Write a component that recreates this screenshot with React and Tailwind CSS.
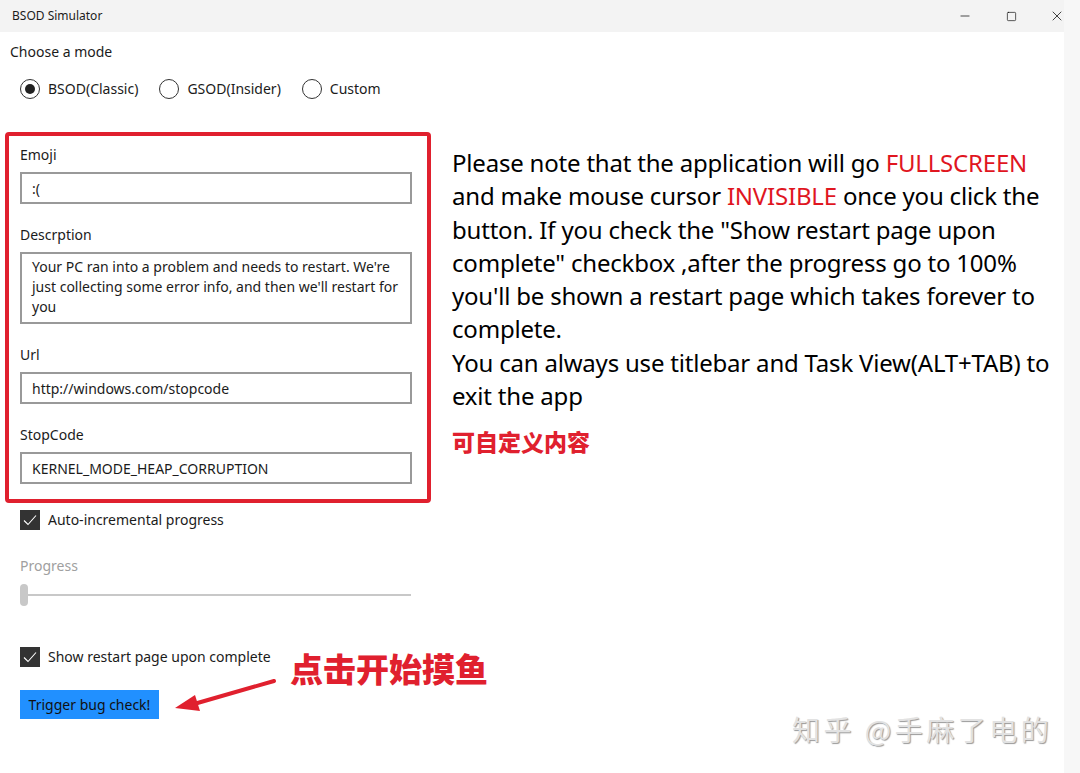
import { Minus, Square, X } from 'lucide-react';

const FONT = { fontFamily: '"Segoe UI", "Noto Sans", "Noto Sans CJK SC", sans-serif' };

const Radio = ({ label, checked }) => (
  <label className="flex items-center gap-2 mr-[21px]">
    <span className="w-5 h-5 rounded-full border border-[#333] flex items-center justify-center">
      {checked && <span className="w-[10px] h-[10px] rounded-full bg-[#222]" />}
    </span>
    <span className="text-[14px] text-[#1b1b1b]">{label}</span>
  </label>
);

const Field = ({ label, value, tall }) => (
  <div className="flex flex-col">
    <p className="text-[14px] text-[#1b1b1b] leading-[20px] mb-[7px]">{label}</p>
    <div
      className={`border-2 border-[#999] bg-white px-[10px] text-[14px] text-[#1b1b1b] ${
        tall ? 'h-[72px] py-[3px] leading-[20px]' : 'h-[32px] flex items-center'
      }`}
    >
      {value}
    </div>
  </div>
);

const Check = ({ label }) => (
  <div className="flex items-center gap-2">
    <span className="w-5 h-5 bg-[#333] flex items-center justify-center">
      <svg width="16" height="16" viewBox="0 0 16 16" fill="none">
        <path d="M2 8.5l4 4L14 3.5" stroke="white" strokeWidth="1.1" />
      </svg>
    </span>
    <span className="text-[14px] text-[#1b1b1b]">{label}</span>
  </div>
);

const App = () => {
  return (
    <div className="w-[1080px] h-[773px] bg-white relative overflow-hidden" style={FONT}>
      {/* Title bar */}
      <div className="h-[32px] bg-[#f3f3f3] flex items-center">
        <span className="pl-[12px] text-[12px] text-[#1b1b1b] flex-1">BSOD Simulator</span>
        <div className="flex items-center h-full">
          <span className="w-[46px] flex justify-center"><Minus size={14} strokeWidth={1.2} /></span>
          <span className="w-[46px] flex justify-center"><Square size={11} strokeWidth={1.4} /></span>
          <span className="w-[46px] flex justify-center"><X size={16} strokeWidth={1.1} /></span>
        </div>
      </div>

      <div className="flex">
        {/* Left column */}
        <div className="w-[440px] flex flex-col">
          <p className="pl-[10px] pt-[10px] text-[14px] text-[#1b1b1b] leading-[20px]">Choose a mode</p>
          <div className="flex items-center pl-[20px] mt-[16px]">
            <Radio label="BSOD(Classic)" checked />
            <Radio label="GSOD(Insider)" />
            <Radio label="Custom" />
          </div>

          {/* Highlighted fields */}
          <div className="ml-[5px] mt-[33px] w-[426px] border-4 border-[#e0202e] rounded-[4px] pl-[11px] pr-[15px] pt-[9px] pb-[15px] flex flex-col gap-[21px]">
            <Field label="Emoji" value=":(" />
            <Field
              label="Descrption"
              value="Your PC ran into a problem and needs to restart. We're just collecting some error info, and then we'll restart for you"
              tall
            />
            <Field label="Url" value="http://windows.com/stopcode" />
            <Field label="StopCode" value="KERNEL_MODE_HEAP_CORRUPTION" />
          </div>

          <div className="pl-[20px] mt-[6px]">
            <Check label="Auto-incremental progress" />
          </div>

          <p className="pl-[20px] mt-[26px] text-[14px] text-[#a0a0a0] leading-[20px]">Progress</p>
          <div className="ml-[20px] w-[391px] h-[24px] mt-[7px] flex items-center relative">
            <div className="w-full h-[2px] bg-[#c8c8c8]" />
            <div className="absolute left-0 top-[1px] w-[8px] h-[22px] rounded-full bg-[#c8c8c8]" />
          </div>

          <div className="pl-[20px] mt-[39px]">
            <Check label="Show restart page upon complete" />
          </div>

          <div className="pl-[20px] mt-[23px]">
            <button className="h-[29px] w-[139px] bg-[#2190ff] text-[14px] text-[#111] px-[8px]">
              Trigger bug check!
            </button>
          </div>
        </div>

        {/* Right column */}
        <div className="pl-[12px] pt-[114px] flex flex-col">
          <p className="text-[24px] leading-[33.3px] text-black tracking-[-0.2px]">
            Please note that the application will go <span className="text-[#e0161f]">FULLSCREEN</span>
            <br />
            and make mouse cursor <span className="text-[#e0161f]">INVISIBLE</span> once you click the
            <br />
            button. If you check the "Show restart page upon
            <br />
            complete" checkbox ,after the progress go to 100%
            <br />
            you'll be shown a restart page which takes forever to
            <br />
            complete.
            <br />
            You can always use titlebar and Task View(ALT+TAB) to
            <br />
            exit the app
          </p>
          <p
            className="mt-[14px] text-[23px] font-black text-[#e0202e] leading-[30px]"
            style={{ fontFamily: '"Noto Sans CJK SC", sans-serif' }}
          >
            可自定义内容
          </p>
        </div>
      </div>

      {/* Annotation over the left column */}
      <p
        className="absolute left-[290px] top-[646px] text-[33px] font-black text-[#e0202e] leading-[44px]"
        style={{ fontFamily: '"Noto Sans CJK SC", sans-serif' }}
      >
        点击开始摸鱼
      </p>
      <svg className="absolute left-[170px] top-[672px]" width="112" height="44" viewBox="0 0 112 44">
        <line x1="104" y1="9" x2="24" y2="32" stroke="#e0202e" strokeWidth="4" strokeLinecap="round" />
        <path d="M5 36 L25 23 L30 39 Z" fill="#e0202e" />
      </svg>

      {/* Watermark */}
      <p
        className="absolute left-[792px] top-[711px] text-[28px] text-[#e2e2e2] leading-[36px] tracking-[3.5px]"
        style={{ fontFamily: '"Noto Sans CJK SC", sans-serif', textShadow: '1px 1px 1px #999' }}
      >
        知乎 @手麻了电的
      </p>

      {/* right window edge */}
      <div className="absolute right-0 top-0 w-[16px] h-full bg-[#f7f7f7]" />
    </div>
  );
};

export default App;
